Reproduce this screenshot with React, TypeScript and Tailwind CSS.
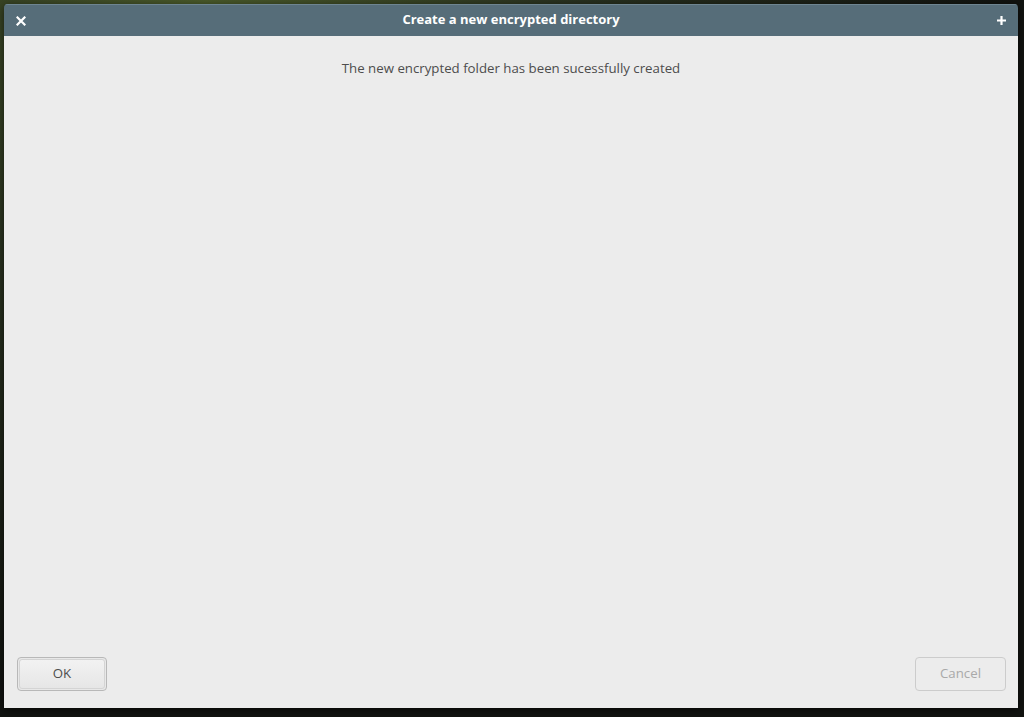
import React from "react";

export default function App() {
  return (
    <div
      className="w-[1024px] h-[717px] overflow-hidden flex flex-col pt-[4px] pl-[4px] pr-[6px] pb-[9px] bg-[radial-gradient(ellipse_at_20%_0%,#4a5a2a_0%,#2a3320_30%,#111310_70%)]"
      style={{ fontFamily: '"Open Sans", "Noto Sans", sans-serif' }}
    >
      <div className="flex-1 flex flex-col rounded-t-[4px] overflow-hidden shadow-[0_2px_8px_rgba(0,0,0,0.6)]">
        <div className="h-[32px] bg-[#566d79] border-t border-[#6e8591] flex items-center justify-between px-[11px] relative">
          <svg width="10" height="10" viewBox="0 0 10 10" className="ml-[1px]">
            <path d="M1.5 1.5 L8.5 8.5 M8.5 1.5 L1.5 8.5" stroke="#ffffff" strokeWidth="2.2" strokeLinecap="square" />
          </svg>
          <div className="absolute inset-0 flex items-center justify-center text-white font-bold text-[13px] pb-[1px] pointer-events-none">
            Create a new encrypted directory
          </div>
          <svg width="11" height="11" viewBox="0 0 11 11" className="mr-[0px]">
            <path d="M5.5 1 V10 M1 5.5 H10" stroke="#ffffff" strokeWidth="2.2" />
          </svg>
        </div>
        <div className="flex-1 bg-[#ececec] flex flex-col">
          <div className="flex-1 flex justify-center pt-[22px]">
            <span className="text-[13.25px] text-[#4d4d4d] leading-[20px]">
              The new encrypted folder has been sucessfully created
            </span>
          </div>
          <div className="flex justify-between pl-[13px] pr-[12px] pb-[17px]">
            <div className="w-[90px] h-[34px] rounded-[4px] border border-[#b8b8b8] p-[1px] bg-[#e8e8e8]">
              <div className="w-full h-full rounded-[3px] border border-[#d4d4d4] bg-[linear-gradient(#f2f2f2,#e6e6e6)] flex items-center justify-center text-[13.25px] text-[#4d4d4d]">
                OK
              </div>
            </div>
            <div className="w-[91px] h-[34px] rounded-[4px] border border-[#cccccc] bg-[#ececec] flex items-center justify-center text-[13.25px] text-[#a9a9a9]">
              Cancel
            </div>
          </div>
        </div>
      </div>
    </div>
  );
}
